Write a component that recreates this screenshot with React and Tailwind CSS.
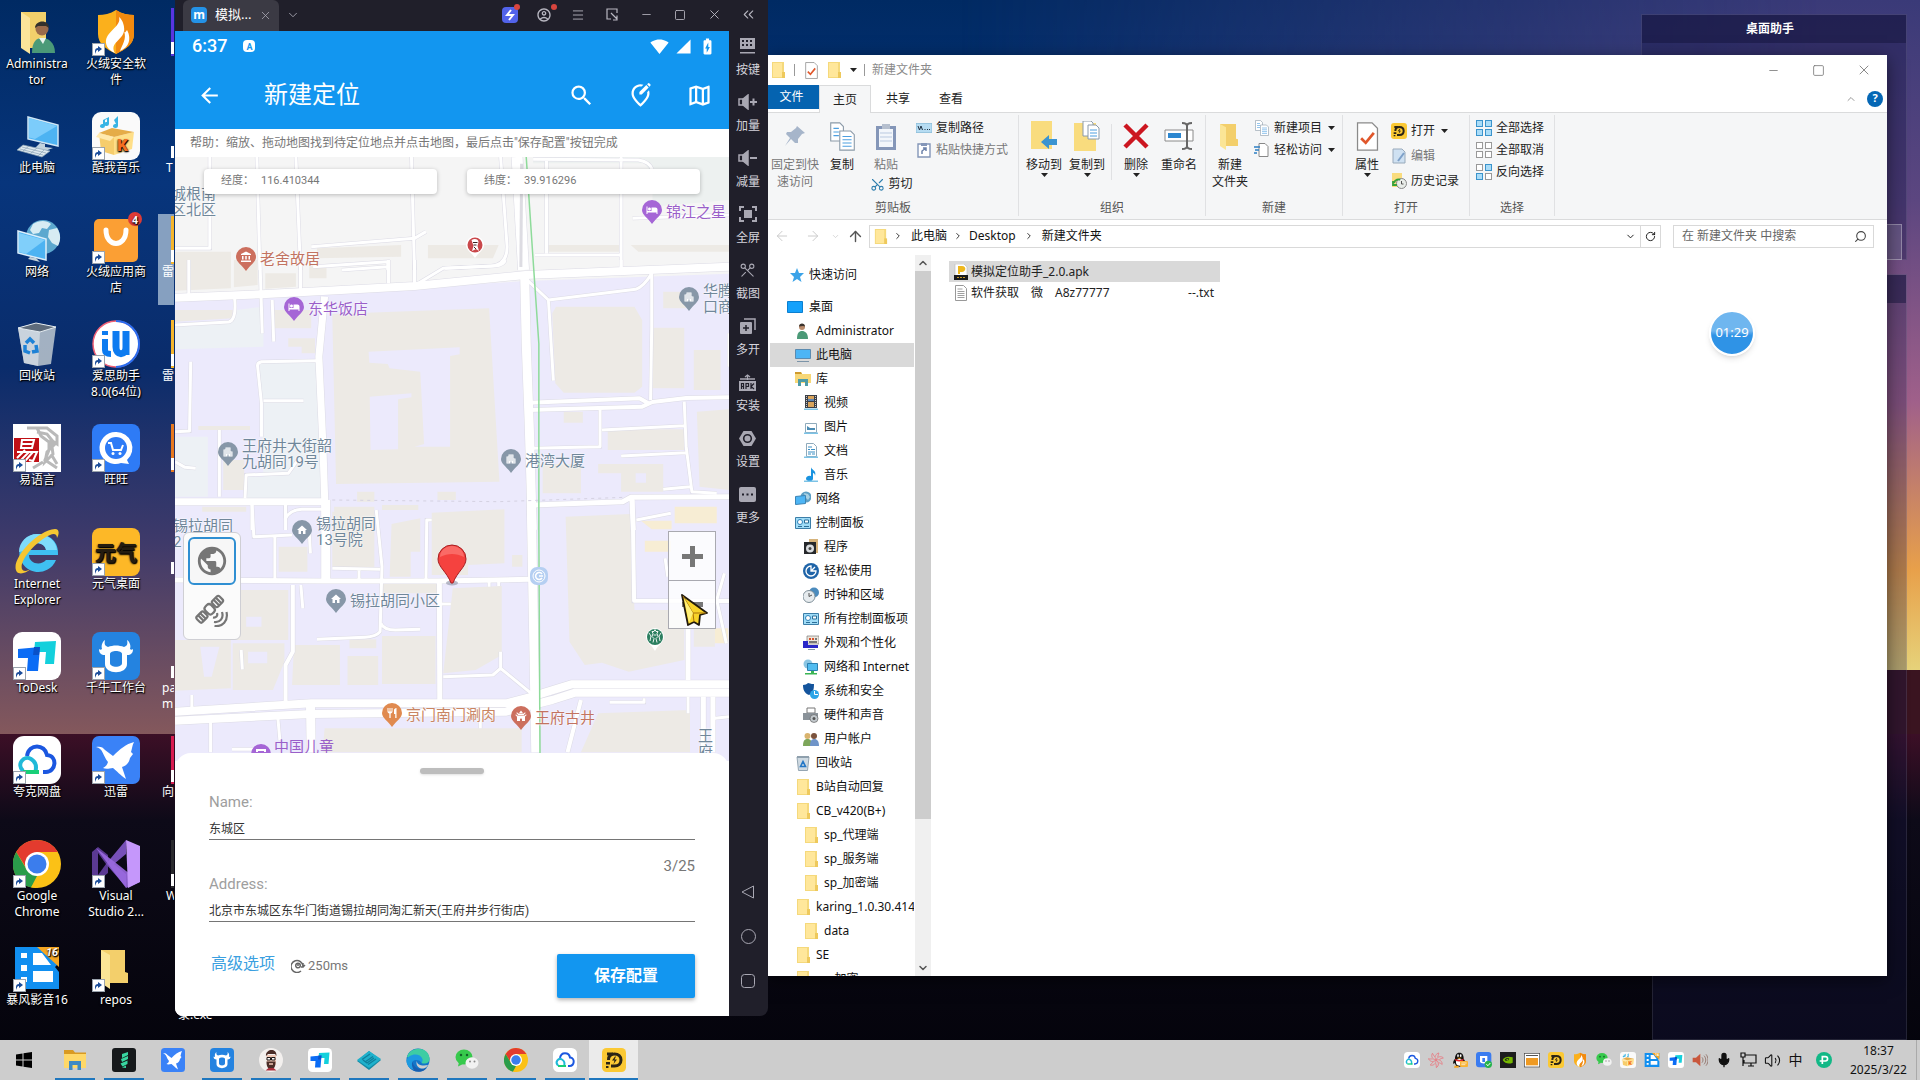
import React from "react";
import {
  MdArrowBack, MdSearch, MdOutlineEditLocationAlt, MdOutlineMap, MdPublic,
  MdSignalWifi4Bar, MdSignalCellular4Bar, MdBatteryChargingFull, MdHotel, MdAccountBalance,
  MdRestaurant, MdApartment, MdHome, MdTempleBuddhist, MdOutlineAccountCircle,
} from "react-icons/md";
import {
  X, ChevronDown, ChevronUp, ChevronRight, Menu, Minus, Square, ChevronsLeft, ArrowLeft, ArrowRight,
  ArrowUp, RotateCw, Search, Scissors, Mic, Volume2,
} from "lucide-react";

/* ---------- logos, drawn on a 48 unit grid ---------- */

const Svg = ({ s = 48, children }) => (
  <svg width={s} height={s} viewBox="0 0 48 48" aria-hidden="true" className="block shrink-0">{children}</svg>
);

const UserFolder = ({ s }) => (
  <Svg s={s}>
    <path d="M8 4h25v36H8z" fill="#f2d06b" />
    <path d="M8 4l9 6v36l-9-6z" fill="#fbe49a" />
    <circle cx="29" cy="21" r="6.5" fill="#9a6a4b" />
    <path d="M22 20c0-8 14-9 14 0l-3-2-8 0z" fill="#33302c" />
    <path d="M19 45c0-11 4-15 10-15s13 4 13 15z" fill="#4b9a78" />
    <path d="M26 30l4 6 3-6z" fill="#e8f3ee" />
  </Svg>
);
const Huorong = ({ s }) => (
  <Svg s={s}>
    <path d="M24 2c6 4 12 5 18 5v19c0 10-8 15-18 20C14 41 6 36 6 26V7c6 0 12-1 18-5z" fill="#fbb01c" />
    <path d="M24 2c6 4 12 5 18 5v19c0 10-8 15-18 20z" fill="#f28a0f" />
    <path d="M27 9c3 10-14 14-13 26 1 6 5 8 9 10-6-10 8-13 9-22 3 8-2 14-4 20 12-5 10-16 7-21-2 3-3 3-3 3 1-6-1-13-5-16z" fill="#fff" />
  </Svg>
);
const Computer = ({ s }) => (
  <Svg s={s}>
    <path d="M15 5l30 8v21l-30-7z" fill="#4db3f2" stroke="#cfe6f5" strokeWidth="1.5" />
    <path d="M16 6l28 8-22 13-6-1.500z" fill="#7cccfb" />
    <path d="M27 31l5 1v3l8 1-8 3-10-3z" fill="#c3d3de" />
    <path d="M10 33l27 6-8 6-25-7z" fill="#dfe9ef" stroke="#8ba3b5" strokeWidth=".7" />
    <path d="M9 35l24 6M7 37l23 6M16 34l-6 5M24 36l-6 5M31 38l-6 6" stroke="#8ba3b5" strokeWidth=".7" />
  </Svg>
);
const Kuwo = ({ s }) => (
  <Svg s={s}>
    <rect width="48" height="48" rx="9" fill="#fafafa" />
    <path d="M11 8l6-3v7a2.500 2 0 1 1-2-2V7l-2 1v6a2.500 2 0 1 1-2-2zM22 8l4-4v10a2.500 2 0 1 1-2-2z" fill="#38b4e4" />
    <path d="M7 21l15 4v18L9 39z" fill="#f6cd6c" /><path d="M22 25l20-5-2 17-18 6z" fill="#ffdf88" />
    <path d="M7 21l13-5 22 4-20 5z" fill="#e5ac48" /><path d="M4 25l3-4 15 4-4 4z" fill="#ffe9ae" />
    <text x="25" y="39" fontSize="17" fontWeight="900" fontFamily="Roboto" fill="#f36e21">K</text>
  </Svg>
);
const Network = ({ s }) => (
  <Svg s={s}>
    <circle cx="30" cy="21" r="17" fill="#5ca8cf" />
    <path d="M20 8c6-4 14-4 18 0l-4 5-5-1-3 5-6 1-3-4zM36 14l8-2c4 6 4 12 1 18l-6-3-4-6z" fill="#d7ecf3" />
    <path d="M5 15l28 8v21L5 37z" fill="#4db3f2" stroke="#dceefa" strokeWidth="1.500" />
    <path d="M6 17l26 7-19 14-7-2z" fill="#80cffa" /><path d="M17 41l6 1 4 4-12-3z" fill="#c5d3da" />
  </Svg>
);
const AppStore = ({ s }) => (
  <Svg s={s}>
    <rect x="2" y="3" width="44" height="43" rx="5" fill="#fb9f34" />
    <path d="M14 14c0 18 20 18 20 0" stroke="#fff" strokeWidth="5" fill="none" strokeLinecap="round" />
  </Svg>
);
const Bin = ({ s }) => (
  <Svg s={s}>
    <path d="M5 8l18-5 20 4-5 37-13 2-14-3z" fill="#b4c0cb" opacity=".9" />
    <path d="M5 8l22 4-2 34-14-3z" fill="#d3dce3" opacity=".8" />
    <path d="M5 8l18-5 20 4-16 5z" fill="#5e6b7b" stroke="#e4ebf0" />
    <path d="M13 23l4-4 4 4M23 25l1 6-5 1M17 33l-5-2 0-6" stroke="#1f82d6" strokeWidth="3.500" fill="none" />
  </Svg>
);
const Aisi = ({ s }) => (
  <Svg s={s}>
    <circle cx="24" cy="24" r="23" fill="#fff" stroke="#ef6076" strokeWidth="1.500" />
    <path d="M24 1a23 23 0 0 1 0 46" fill="none" stroke="#2a6df0" strokeWidth="2" />
    <path d="M13 11v4M13 19v11c0 3 2 4 6 4" stroke="#0d7bf0" strokeWidth="6" fill="none" />
    <path d="M24 11v16c0 9 10 9 10 0V11M34 11v24" stroke="#0d7bf0" strokeWidth="7" fill="none" />
  </Svg>
);
const Yi = ({ s }) => (
  <Svg s={s}>
    <rect width="48" height="48" fill="#fff" />
    <path d="M14 4h20l10 8v8l-6-4 2 14-8 8 2-10 8-8-8-10-10-2M24 4l4 8 8 6v8l-4 10 12 8M38 30l6 10M20 44l10-6" stroke="#b9b9b9" strokeWidth="3" fill="none" />
    <path d="M1 14h25v24H1z" fill="#c01016" />
    <path d="M9 16h12l-2 8H8zM9 20h11M4 28h20l-4 9-4-1M12 26l-8 8M16 28l-9 9M20 28l-8 9" stroke="#fff" strokeWidth="2" fill="none" />
  </Svg>
);
const Wangwang = ({ s }) => (
  <Svg s={s}>
    <rect width="48" height="48" rx="8" fill="#2e7bf6" />
    <path d="M24 8a16 16 0 1 0 5 31l8 1-2-4A16 16 0 0 0 24 8z" fill="#fff" />
    <circle cx="24" cy="24" r="11" fill="#2e7bf6" />
    <path d="M16 19h3l2 7h8l2-5" stroke="#fff" strokeWidth="2" fill="none" /><circle cx="21" cy="29.500" r="1.500" fill="#fff" /><circle cx="28" cy="29.500" r="1.500" fill="#fff" />
  </Svg>
);
const IE = ({ s }) => (
  <Svg s={s}>
    <path d="M24 6a19 19 0 1 0 19 26h-10c-5 6-17 4-17-5h29C46 14 37 6 24 6zm-8 16c1-9 16-9 17 0z" fill="#3fc0f2" />
    <path d="M24 6C14 6 6 14 6 24l9-2c3-10 17-8 18 0h11C43 12 34 6 24 6z" fill="#7fdcfb" />
    <path d="M4 44C-4 34 22 3 42 1c5 0 4 6 2 9 0-4-3-5-7-3C22 14 6 33 9 41c1 3 6 2 9 0-5 4-11 6-14 3z" fill="#f5c632" />
  </Svg>
);
const Yuanqi = ({ s }) => (
  <Svg s={s}>
    <rect width="48" height="48" rx="8" fill="#fdb827" />
    <text x="3" y="32" fontSize="21" fontWeight="900" fontFamily="Noto Sans CJK SC" fill="#241c10">元气</text>
  </Svg>
);
const ToDesk = ({ s }) => (
  <Svg s={s}>
    <rect width="48" height="48" rx="9" fill="#fff" />
    <path d="M22 10l21-1-2 23h-9l1-12H21z" fill="#13d0dc" /><path d="M5 17l22-2-2 24H14l1-13H5z" fill="#0b6cf5" /><path d="M21 15l6 0-1 8H20z" fill="#0a51c9" />
  </Svg>
);
const Qianniu = ({ s }) => (
  <Svg s={s}>
    <rect width="48" height="48" rx="8" fill="#2483e0" />
    <path d="M13 8c-1 4 0 6 3 7 5-2 11-2 16 0 3-1 4-3 3-7 3 2 4 6 3 9 1 1 2 1 3 0 0 4-2 6-6 6v9c0 11-22 11-22 0v-9c-4 0-6-2-6-6 1 1 2 1 3 0-1-3 0-7 3-9z" fill="#fff" />
    <path d="M18 22c0-4 12-4 12 0v9c0 5-12 5-12 0z" fill="#2483e0" />
  </Svg>
);
const Quark = ({ s }) => (
  <Svg s={s}>
    <rect width="48" height="48" rx="11" fill="#fff" />
    <path d="M14 20c2-13 18-12 20-1 11 1 9 17-1 17h-3" fill="none" stroke="#1b57e0" strokeWidth="4" />
    <path d="M10 35c-7-7 1-16 8-12 5 3 6 8 4 14" fill="none" stroke="#20b9d8" strokeWidth="4" />
    <path d="M10 36h16" stroke="#18cf78" strokeWidth="4" />
  </Svg>
);
const Xunlei = ({ s }) => (
  <Svg s={s}>
    <rect width="48" height="48" rx="7" fill="#3a82f7" />
    <path d="M4 11c4-1 7 0 9 3l8 6C28 13 34 8 42 6c-2 4-2 7-3 10l2 2-3 4c-1 5-4 8-8 9l4 12c-6-4-9-8-13-11-5 1-8 1-10 0 3-2 4-3 5-6-5-6-5-14-12-15z" fill="#fff" />
  </Svg>
);
const Chrome = ({ s }) => (
  <Svg s={s}>
    <circle cx="24" cy="24" r="24" fill="#fbc116" />
    <path d="M24 0a24 24 0 0 1 20.800 12H24L14 29 3.200 12A24 24 0 0 1 24 0z" fill="#e33b2e" />
    <path d="M3.200 12L14 30l10 6-6 11.500A24 24 0 0 1 3.200 12z" fill="#2a9c4a" />
    <path d="M24 12h20.800L34 30 23 48l-5-.5L28 34z" fill="#fbc116" />
    <circle cx="24" cy="24" r="12" fill="#fff" /><circle cx="24" cy="24" r="9.500" fill="#3b7ded" />
  </Svg>
);
const VStudio = ({ s }) => (
  <Svg s={s}>
    <path d="M0 12l6-5 10 8v18l-10 8-6-5z" fill="#5b3a92" /><path d="M6 13v22l8-11z" fill="#0a0716" />
    <path d="M34 0L14 24l20 23V34L22 24l12-10z" fill="#7750b8" />
    <path d="M4 8L34 48l14-6-24-19z" fill="#9a69e0" opacity=".9" />
    <path d="M34 0l14 6v36l-12 6z" fill="#c597fb" />
  </Svg>
);
const Baofeng = ({ s }) => (
  <Svg s={s}>
    <path d="M2 3h44v16l-4 4 4 5v17H2z" fill="#118ff0" /><path d="M24 3h22v20z" fill="#f6a723" />
    <path d="M8 9h6v5H8zM8 21h6v6H8zM20 9h9l9 12H20zM20 27h20v11H20zM8 33h6v5H8z" fill="#fff" />
    <text x="33" y="12" fontSize="11" fontWeight="700" fontStyle="italic" fontFamily="Roboto" fill="#fff">16</text>
  </Svg>
);
const Folder = ({ s }) => (
  <Svg s={s}>
    <path d="M9 6h24v22l3 1v10H9z" fill="#f3cf6b" /><path d="M9 6l9 5v34l-9-6z" fill="#fbe596" />
  </Svg>
);
const FlatFolder = ({ s = 16 }) => (
  <svg width={s} height={s} viewBox="0 0 16 16" className="block shrink-0" aria-hidden="true">
    <path d="M2 0h12v12l1 0v4H2z" fill="#f5d97c" /><path d="M3 1h9v14H3z" fill="#ffe79b" /><path d="M12 10h3v6h-3z" fill="#eec95c" />
  </svg>
);
const Explorer = ({ s }) => (
  <Svg s={s}>
    <path d="M2 4h18l4 5h22v9H2z" fill="#d99a22" /><path d="M2 12h44v28H2z" fill="#ffd868" />
    <path d="M12 44V26h24v18h-7V34H19v10z" fill="#3f8ac4" />
  </Svg>
);
const GreenFeather = ({ s }) => (
  <Svg s={s}><rect width="48" height="48" rx="6" fill="#16191b" /><path d="M20 12l12-4v6l-12 6zM18 22l14-6v6l-12 6zM17 31l14-6v7l-10 5zM20 39l8-4v5z" fill="#38d6a0" /></Svg>
);
const Avatar = ({ s }) => (
  <Svg s={s}>
    <circle cx="24" cy="24" r="24" fill="#f3f0ee" /><path d="M15 14h19v18c-4 9-14 9-18 0z" fill="#f0c7b5" />
    <path d="M14 16c-2-14 22-18 21 0l-3-4H18zM15 27h18c0 12-3 15-9 15s-9-4-9-15z" fill="#4b2d27" />
    <path d="M16 19h7v5h-7zM25 19h7v5h-7z" stroke="#1b1717" strokeWidth="2" fill="#fff" /><path d="M20 32h8" stroke="#f3c9b7" strokeWidth="3" />
    <path d="M13 45l6-5h10l6 5z" fill="#a82e3a" />
  </Svg>
);
const Diamond = ({ s }) => (
  <Svg s={s}>
    <path d="M24 6l24 18-24 20L0 26z" fill="#138aa5" /><path d="M24 6l24 16-24 18L0 24z" fill="#1fb1cc" />
    <path d="M10 23l16-11M16 28l16-11M12 24l8 6 14-10M22 33l16-11" stroke="#0f7f9b" strokeWidth="2.500" fill="none" />
  </Svg>
);
const Edge = ({ s }) => (
  <Svg s={s}>
    <circle cx="24" cy="24" r="23" fill="#1376c9" />
    <path d="M2 18C8-4 44-4 47 20c1 10-9 13-16 10 3-7-4-13-12-13S6 22 2 18z" fill="#3dcda3" />
    <path d="M20 17c-8 2-11 18 4 24 6 2 13 1 18-2-6 10-22 12-32 2C-4 26 8 14 20 17z" fill="#185fb0" />
    <path d="M1 25C4 11 28 8 33 22c1 3-1 6-2 8-2-4-5-6-11-6C10 24 10 36 16 44 6 41 1 34 1 25z" fill="#1d9ae0" />
    <path d="M22 25c-2 8 10 12 22 9-2 4-5 6-9 7-9 1-17-6-13-16z" fill="#cdcdcd" />
  </Svg>
);
const WeChat = ({ s }) => (
  <Svg s={s}>
    <ellipse cx="18" cy="18" rx="17" ry="15" fill="#37c94c" /><path d="M8 28l-2 9 10-5z" fill="#37c94c" />
    <circle cx="12" cy="14" r="2.500" fill="#14642a" /><circle cx="24" cy="14" r="2.500" fill="#14642a" />
    <ellipse cx="34" cy="30" rx="13" ry="11.500" fill="#f2f2f2" /><circle cx="30" cy="27" r="2" fill="#8b8b8b" /><circle cx="39" cy="27" r="2" fill="#8b8b8b" />
  </Svg>
);
const LD = ({ s }) => (
  <Svg s={s}>
    <rect width="48" height="48" rx="9" fill="#fbc934" />
    <path d="M13 24c0-8 5-12 12-12 8 0 13 5 13 12s-5 12-13 12h-7" stroke="#2b2415" strokeWidth="6" fill="none" />
    <path d="M10 9h12v6H10zM8 28h8v5H8zM8 36h5v4H8zM26 17l-6 8h5l-2 7 7-9h-5l3-6z" fill="#2b2415" />
  </Svg>
);
const WinLogo = () => (
  <svg width="16" height="16" viewBox="0 0 16 16" aria-hidden="true"><path d="M0 2.500L6.500 1.500V7.500H0zM7.500 1.300L16 0v7.500H7.500zM0 8.500h6.500v6L0 13.500zM7.500 8.500H16V16l-8.500-1.300z" fill="#000" /></svg>
);
const Pinwheel = ({ s }) => (
  <Svg s={s}>{[0, 51, 103, 154, 206, 257, 309].map((a) => (
    <path key={a} d="M24 24C18 14 24 4 33 3c-3 4-2 8-4 12" fill="none" stroke="#e77d84" strokeWidth="2.500" transform={`rotate(${a} 24 24)`} />))}</Svg>
);
const QQ = ({ s }) => (
  <Svg s={s}>
    <path d="M22 2c10 0 13 8 13 18 5 7 7 12 5 16l-4-3-6 11H14L8 33l-4 3c-2-6 1-11 5-16C9 10 13 2 22 2z" fill="#111" />
    <ellipse cx="22" cy="31" rx="10" ry="10" fill="#fff" /><path d="M10 20c8 5 16 5 24 0l1 5c-9 5-17 5-26 0z" fill="#e5252a" />
    <ellipse cx="18" cy="11" rx="2.500" ry="4" fill="#fff" /><ellipse cx="26" cy="11" rx="2.500" ry="4" fill="#fff" />
    <path d="M14 17h16l-8 4zM8 41h12v6H6z" fill="#f7a51c" /><rect x="24" y="27" width="24" height="18" rx="3" fill="#f9b334" /><path d="M28 33h16M28 38h12" stroke="#fff" strokeWidth="2" />
  </Svg>
);
const Nvidia = ({ s }) => (
  <Svg s={s}><rect width="48" height="48" fill="#1d1d1d" /><path d="M8 24c6-10 16-12 30-8v16c-10 5-24 3-30-8z" fill="#76b900" /><path d="M14 24c4-6 9-7 14-4-4 8-8 9-14 4z" fill="#1d1d1d" /><circle cx="22" cy="23" r="3" fill="#76b900" /></Svg>
);
const TrayWindow = ({ s }) => (
  <Svg s={s}><rect x="1" y="4" width="46" height="41" fill="#fff" stroke="#444" strokeWidth="2" /><path d="M6 9h36v3H6z" fill="#555" /><path d="M6 18h36v22H6z" fill="#ef9a22" /></Svg>
);
const TrayShield = ({ s }) => (
  <Svg s={s}><rect width="46" height="46" rx="9" fill="#3b7cf0" /><path d="M12 12h22v16c0 9-22 9-22 0z" fill="#fff" /><path d="M19 18h8v12h-8z" fill="#3b7cf0" /><circle cx="37" cy="37" r="11" fill="#27b44b" /><path d="M31 37l5 4 7-8" stroke="#fff" strokeWidth="3" fill="none" /></Svg>
);
const TraySound = ({ s }) => (
  <Svg s={s}><path d="M2 17h10L25 5v38L12 31H2z" fill="#c9573c" /><path d="M30 16c4 5 4 11 0 16M36 11c7 8 7 18 0 26M42 7c8 10 8 24 0 34" stroke="#8d6a60" strokeWidth="2.500" fill="none" /></Svg>
);
const GreenP = ({ s }) => (
  <Svg s={s}><circle cx="24" cy="24" r="24" fill="#12b886" /><path d="M19 36V14h9c9 0 9 13 0 13h-9M11 27l8 0" stroke="#fff" strokeWidth="5" fill="none" /></Svg>
);

const Shortcut = () => (
  <span className="absolute bottom-0 left-0 grid h-[13px] w-[13px] place-items-center border border-[#9aa3ad] bg-white">
    <svg width="9" height="9" viewBox="0 0 9 9" aria-hidden="true"><path d="M1 9V6c0-2 1-3 3-3V1l4 3-4 3V5C2 5 2 7 1 9z" fill="#1b4d9a" /></svg>
  </span>
);

/* ---------- desktop ---------- */

const COL1 = [
  [UserFolder, ["Administra", "tor"], false], [Computer, ["此电脑"], false], [Network, ["网络"], false],
  [Bin, ["回收站"], false], [Yi, ["易语言"], true], [IE, ["Internet", "Explorer"], false],
  [ToDesk, ["ToDesk"], true], [Quark, ["夸克网盘"], true], [Chrome, ["Google", "Chrome"], true], [Baofeng, ["暴风影音16"], true],
];
const COL2 = [
  [Huorong, ["火绒安全软", "件"], true], [Kuwo, ["酷我音乐"], true], [AppStore, ["火绒应用商", "店"], true],
  [Aisi, ["爱思助手", "8.0(64位)"], true], [Wangwang, ["旺旺"], true], [Yuanqi, ["元气桌面"], true],
  [Qianniu, ["千牛工作台"], true], [Xunlei, ["迅雷"], true], [VStudio, ["Visual", "Studio 2..."], true], [Folder, ["repos"], true],
];
const COL3 = [
  [[""], "bg-[#5a35e0]", "pl-2"], [["T"], "bg-transparent", "pl-2"], [["雷"], "bg-[#f5b52c]", "pl-1"], [["雷"], "bg-[#f5b52c]", "pl-1"],
  [[""], "bg-[#e8791f]", "pl-1"], [[""], "bg-transparent", "pl-1"], [["pa", "m"], "bg-transparent", "pl-1"], [["向"], "bg-[#d81b50]", "pl-1"], [["W"], "bg-[#2a2a2e]", "pl-2"],
];

function DesktopColumn({ items, className }) {
  return (
    <div className={"flex flex-col " + className}>
      {items.map(([Icon, lines, link], i) => (
        <button key={i} type="button" className="flex h-26 flex-col items-center pt-2 text-xs leading-4 text-white [text-shadow:0_1px_2px_#000,1px_1px_1px_#000]">
          <span className="relative block">
            <Icon s={48} />
            {link && <Shortcut />}
            {Icon === AppStore && <span className="absolute -top-1 -right-0.5 grid h-3.5 w-3.5 place-items-center rounded-full bg-[#dd3b36] text-[10px] font-bold">4</span>}
          </span>
          {lines.map((l) => <span key={l} className="whitespace-nowrap">{l}</span>)}
        </button>
      ))}
    </div>
  );
}

/* ---------- map ---------- */

const BUILDINGS = [
  [-471, "#edf1f0", "M950 471H1462V600L1262 620V520L1240 490H950Z"],
  [-471, "#edeae5", "M14 755H160V810H14ZM385 745L605 735V770L385 775ZM675 735H860L845 775H675ZM990 735H1175V755H990ZM1205 735H1462V755H1225Z"],
  [309, "#edeae5", "M14 0H160V85L14 92ZM168 0H230V75L168 82ZM250 40H330V80L250 86ZM365 15H410V55H365Z"],
  [309, "#edf1f5", "M14 195L165 185L175 150L245 140V260L14 268ZM235 308L385 305L400 715H200V650H245ZM14 530H100V710H14Z"],
  [309, "#edeae5", "M14 150H165V175L14 185ZM270 150H370V205H270ZM310 235H380V280H345V260H310ZM75 498H210V510H75ZM140 600H195V690H140ZM425 162L835 145L862 665L435 672Z"],
  [309, "#edeae5", "M1010 140H1215L1235 180V380L1215 398H1030L1008 370L1000 160ZM1260 203H1345V385H1260ZM1370 270H1440V390H1370ZM1290 95H1350V145H1290ZM1145 508H1345V570H1145ZM1378 455L1462 448V690L1385 680ZM975 612H1075V700H975ZM1120 612H1290V695H1180V640H1120ZM490 695H535V725H490ZM700 695H748V720H700ZM1030 455H1080V488H1030ZM555 735H650V750H555ZM85 740H200V755H85ZM430 740H535V800H430Z"],
  [309, "#eceafc", "M520 275L758 262V283L733 288V560H640L665 552L655 335L575 325L570 312L522 308ZM523 410L632 400V412L597 418V568L525 570ZM1218 640H1245V668H1218Z"],
  [1029, "#edeae5", "M685 38L875 28V190L780 195V225H685ZM1035 50L1205 42L1215 330H1345V480L1200 515L1130 488L1085 495L1045 425ZM740 265L868 258V465L800 510L715 520ZM425 35H535V205H425ZM580 72L655 55V155H630V230H575ZM285 140H360V215H285ZM550 250H700V280H550ZM325 435H445V555H320ZM470 418H540V445H470ZM555 408H695V552H555ZM465 468H545V555H465ZM14 420H160V565L14 572ZM165 270H310V420H165ZM165 430H300V485L270 570H165Z"],
  [1029, "#edeae5", "M405 685H920V757H400ZM1120 640L1360 630V757H1075ZM895 165H922V200H895ZM1370 385H1425V440H1370Z"],
  [1029, "#eceafc", "M80 440H130L110 530H90ZM200 350H240V380H200ZM205 455H255V490H205Z"],
  [1029, "#f7edd4", "M1320 20H1430V70H1320ZM1232 62H1312V88H1260ZM1242 122H1310V155H1242ZM1425 385H1460V430H1425Z"],
];

const ROADS = [
  [-471, 3, "M105 471V745H14M228 471L236 810M330 471L342 810M632 471L640 810M865 471L882 740Q882 795 840 798L720 805M985 480V760M1180 471V810M950 478L1225 480Q1255 485 1262 510M370 740L640 715L670 695M375 800L570 785V810M955 765H1180M1210 655L1462 645"],
  [-471, 11, "M908 471L925 810"],
  [309, 8, "M14 113L240 103L400 93L640 78L930 45L1462 20"],
  [309, 3, "M50 0V105M236 0L242 220M342 0V90M572 0V70M570 20L450 30M640 70V0M650 70L715 25L850 18Q875 15 877 0M1180 0V25M268 120L272 245M170 115Q175 180 155 186L14 195M385 302L240 305Q228 308 230 320L240 430V530M245 422H350M55 305L52 513L14 515M130 510V710M197 715L200 645L310 640L335 600M990 118L1003 362M925 50L990 120L1218 88Q1240 80 1260 40V200L1257 420M1125 450V560L945 565M1345 425L1350 560L1365 695L1430 700M1130 510L1345 497M1180 588L1350 578M1290 688L1360 680M215 735V810M303 735V810M14 605L40 622L68 625M1462 220V320"],
  [309, 4, "M940 428L1228 415L1255 432M940 450L1235 440L1262 426L1350 414L1462 412"],
  [309, 7, "M405 110L390 290L400 540L408 810M14 725H410"],
  [309, 9, "M928 50L932 250L940 500L948 810"],
  [309, 5, "M950 735L1185 725L1205 712L1462 710M1208 715L1212 810"],
  [1029, 3, "M215 0L220 110L320 105M303 0V55Q315 30 345 28H400M275 110V240M365 100L368 160M540 30L555 200L550 395Q540 410 510 412L385 418M425 205L550 208M495 210V240M670 240L672 60H685M710 312H735M343 255L348 325M552 370Q560 390 590 390L655 388M715 530L845 525L865 505V455M865 505L945 580M187 450L190 508M1220 60L1310 40M1450 220L1430 300L1455 430M1295 175L1302 230M58 585V630M107 665V757M283 655L288 720M812 640V685M1355 590V640M1150 607H1240V595M1425 655L1462 650M163 748H240M835 245V260M860 245V258"],
  [1029, 4, "M322 255V455L303 495V605M1075 600L1040 757M1210 0L1214 302L1462 303"],
  [1029, 5, "M14 240L400 243H700L940 238M705 250L706 600M1355 385V540M1395 590V757M1420 590V757"],
  [1029, 9, "M408 0V240M945 0L957 757M368 600L370 757"],
  [1029, 8, "M14 635L370 610H880L940 592L1050 553H1462M14 662L370 642L880 635L1000 600L1060 578H1462"],
];

function MapCanvas() {
  return (
    <svg viewBox="14 0 1448 1815" preserveAspectRatio="none" className="absolute inset-x-0 top-0 h-[605px] w-full" aria-hidden="true">
      <rect x="14" width="1448" height="1815" fill="#eceafc" />
      <path d="M14 0H1462V350L930 372L14 434Z" fill="#f5f5f5" />
      {BUILDINGS.map(([y, c, d], i) => <path key={i} d={d} fill={c} transform={`translate(0 ${y})`} />)}
      {ROADS.map(([y, w, d], i) => <path key={i} d={d} fill="none" stroke="#dcdbe5" strokeWidth={w + 1} vectorEffect="non-scaling-stroke" transform={`translate(0 ${y})`} />)}
      {ROADS.map(([y, w, d], i) => <path key={i} d={d} fill="none" stroke="#fff" strokeWidth={w} strokeLinejoin="round" vectorEffect="non-scaling-stroke" transform={`translate(0 ${y})`} />)}
      <path d="M920 20L918 330" stroke="#dddce2" strokeWidth="3" fill="none" vectorEffect="non-scaling-stroke" />
      <path d="M425 1029L860 1034L1190 1021" stroke="#d5d2e2" strokeDasharray="3 4" fill="none" vectorEffect="non-scaling-stroke" />
      <path d="M932 0L950 309L965 560V1119L968 1800" stroke="#8edb9a" strokeWidth="1.500" fill="none" vectorEffect="non-scaling-stroke" />
    </svg>
  );
}

const TONE = {
  purple: ["text-[#9a5fc9]", "#a566d6"],
  brick: ["text-[#c27361]", "#cc6f5e"],
  orange: ["text-[#c98563]", "#e08a4f"],
  slate: ["text-[#70879a]", "#8797a8"],
};

function Poi({ at, tone, Icon, lines }) {
  return (
    <div className={"absolute flex items-center gap-1 text-[15px] leading-4 whitespace-nowrap [text-shadow:0_0_2px_#fff,0_0_2px_#fff] " + at + " " + TONE[tone][0]}>
      {Icon && (
        <span className="relative block h-6 w-5 shrink-0">
          <svg width="20" height="24" viewBox="0 0 20 24" aria-hidden="true"><path d="M10 0a10 10 0 0 1 10 10c0 5-6 8-10 14C6 18 0 15 0 10A10 10 0 0 1 10 0z" fill={TONE[tone][1]} /></svg>
          <Icon className="absolute top-1 left-1 text-white" size={12} />
        </span>
      )}
      <span>{lines.map((l) => <span key={l} className="block">{l}</span>)}</span>
    </div>
  );
}

function CoordBox({ id, label, value }) {
  return (
    <div className="flex h-[25px] min-w-0 flex-1 items-center gap-[7px] rounded-sm bg-white px-[17px] text-[11px] text-[#777] shadow-[0_1px_4px_rgba(0,0,0,.25)]">
      <label htmlFor={id} className="shrink-0 whitespace-nowrap">{label}</label>
      <input id={id} defaultValue={value} className="w-full min-w-0 bg-transparent text-[11px] outline-none" />
    </div>
  );
}

function MapView() {
  return (
    <div className="relative h-[604px] overflow-hidden font-['Roboto','Noto_Sans_CJK_SC',sans-serif]">
      <MapCanvas />
      <Poi at="-left-1 top-[29px]" tone="slate" lines={["城根南", "区北区"]} />
      <Poi at="left-[467px] top-[43px]" tone="purple" Icon={MdHotel} lines={["锦江之星"]} />
      <Poi at="left-[61px] top-[90px]" tone="brick" Icon={MdAccountBalance} lines={["老舍故居"]} />
      <Poi at="left-[109px] top-[140px]" tone="purple" Icon={MdHotel} lines={["东华饭店"]} />
      <Poi at="left-[504px] top-[126px]" tone="slate" Icon={MdApartment} lines={["华腾", "口商"]} />
      <Poi at="left-[43px] top-[281px]" tone="slate" Icon={MdApartment} lines={["王府井大街韶", "九胡同19号"]} />
      <Poi at="left-[326px] top-[292px]" tone="slate" Icon={MdApartment} lines={["港湾大厦"]} />
      <Poi at="-left-0.5 top-[361px]" tone="slate" lines={["锡拉胡同", "2"]} />
      <Poi at="left-[117px] top-[359px]" tone="slate" Icon={MdHome} lines={["锡拉胡同", "13号院"]} />
      <Poi at="left-[151px] top-[432px]" tone="slate" Icon={MdHome} lines={["锡拉胡同小区"]} />
      <Poi at="left-[207px] top-[546px]" tone="orange" Icon={MdRestaurant} lines={["京门南门涮肉"]} />
      <Poi at="left-[336px] top-[549px]" tone="brick" Icon={MdTempleBuddhist} lines={["王府古井"]} />
      <div className="absolute top-[582px] left-[99px] text-[15px] leading-4 text-[#9a5fc9]">中国儿童</div>
      <svg width="20" height="24" viewBox="0 0 20 24" className="absolute top-[587px] left-[76px]" aria-hidden="true"><path d="M10 0a10 10 0 0 1 10 10c0 5-6 8-10 14C6 18 0 15 0 10A10 10 0 0 1 10 0z" fill="#a566d6" /><path d="M6 8V5M14 8V5M6 6h8" stroke="#fff" strokeWidth="2" /></svg>
      <Poi at="left-[523px] top-[571px]" tone="slate" lines={["王", "府"]} />

      <svg width="18" height="22" viewBox="0 0 18 22" className="absolute top-[79px] left-[291px]" aria-label="KFC">
        <path d="M9 0a9 9 0 0 1 9 9c0 5-6 8-9 13C6 17 0 14 0 9a9 9 0 0 1 9-9z" fill="#fff" /><circle cx="9" cy="9" r="7.500" fill="#c9474a" />
        <path d="M5.500 4c3-2 7-1 7 2l-1 4 1.500 5-3-2-4 2 1.500-5z" fill="#fff" /><path d="M7 6.500h4.500M7.500 9h3M8 11l2 2" stroke="#3a2222" />
      </svg>
      <svg width="18" height="23" viewBox="0 0 18 23" className="absolute top-[471px] left-[471px]" aria-label="Starbucks">
        <path d="M9 0a9 9 0 0 1 9 9c0 5-6 8-9 14C6 17 0 14 0 9a9 9 0 0 1 9-9z" fill="#fff" /><circle cx="9" cy="9" r="8" fill="#2c7f60" />
        <path d="M9 1.500l1 2 2 0-1 2 1 3-2 2 1 4M9 1.500l-1 2-2 0 1 2-1 3 2 2-1 4M3 5l2 3-1 5M15 5l-2 3 1 5M7.500 7h3" stroke="#fff" strokeWidth=".9" fill="none" />
      </svg>
      <svg width="18" height="18" viewBox="0 0 18 18" className="absolute top-[410px] left-[355px]" aria-label="地铁">
        <rect width="18" height="18" rx="7" fill="#b5cff2" /><circle cx="9" cy="9" r="6" fill="none" stroke="#fff" /><path d="M12 7a3.500 3.500 0 1 0 0 4M9 9h4" stroke="#fff" fill="none" strokeWidth="1.500" />
      </svg>
      <svg width="30" height="42" viewBox="0 0 30 42" className="absolute top-[387px] left-[262px]" aria-label="当前位置">
        <ellipse cx="15" cy="39" rx="6" ry="2.500" fill="#9a9cb0" opacity=".7" />
        <path d="M15 1a14 14 0 0 1 14 14c0 8-9 13-13 24h-2C10 28 1 23 1 15A14 14 0 0 1 15 1z" fill="#f5423f" stroke="#a51f22" />
        <path d="M15 2c7 0 12 5 12 11-8-4-16-4-24 0C3 7 8 2 15 2z" fill="#fa6a66" />
      </svg>

      <div className="absolute inset-x-[29px] top-3 flex gap-[30px]">
        <CoordBox id="lng" label="经度：" value="116.410344" />
        <CoordBox id="lat" label="纬度：" value="39.916296" />
      </div>

      <div className="absolute top-[375px] left-2 flex w-[58px] flex-col items-center rounded-md border border-[#cfcfd4] bg-[#fbfbfb] p-1">
        <button type="button" aria-label="地图图层" className="grid h-12 w-12 place-items-center rounded-md border-2 border-[#2f8fd2] bg-[#f7f7f7] text-[#767676]"><MdPublic size={34} /></button>
        <button type="button" aria-label="卫星图层" className="grid h-[50px] w-12 place-items-center">
          <svg width="34" height="34" viewBox="0 0 34 34" fill="none" stroke="#767676" strokeWidth="2.200">
            <g transform="rotate(-45 14 17)"><rect x="-1" y="13" width="10" height="8" rx="2" /><rect x="11" y="12" width="8" height="10" rx="3" /><rect x="21" y="13" width="10" height="8" rx="2" /><path d="M2.500 13v8M5.500 13v8M24.500 13v8M27.500 13v8M9 17h2M19 17h2" /></g>
            <path d="M22 20c1 3-1 5-4 4.500M27 19c2 6-2 11-8 10M31.500 19c2 9-4 15-12 14" />
          </svg>
        </button>
      </div>

      <div className="absolute top-[374px] right-[13px] flex w-12 flex-col border border-[#a9a9b0] bg-white/80">
        <button type="button" aria-label="放大" className="grid h-12 place-items-center"><svg width="21" height="21" viewBox="0 0 21 21"><path d="M10.500 0v21M0 10.500h21" stroke="#777" strokeWidth="5" /></svg></button>
        <button type="button" aria-label="缩小" className="grid h-12 place-items-center border-t border-[#a9a9b0]"><svg width="21" height="21" viewBox="0 0 21 21"><path d="M0 10.500h21" stroke="#777" strokeWidth="5" /></svg></button>
      </div>
      <svg width="28" height="33" viewBox="0 0 28 33" className="absolute top-[437px] left-[506px]" aria-hidden="true">
        <path d="M1 1l25 18-7 2-1 10-5-3-6 3z" fill="#f8d32a" stroke="#221a0c" strokeWidth="1.800" strokeLinejoin="round" /><path d="M2 2l10 17 1 9M12 19l13 0" stroke="#a8720c" fill="none" /><path d="M3 4l9 15-4 10z" fill="#fff07a" />
      </svg>
    </div>
  );
}

/* ---------- emulator window ---------- */

const Kbd = () => <svg width="18" height="16" viewBox="0 0 18 16"><path d="M1 0h15v11H1zM1 14h15v1.500H1z" fill="#a9a8b3" /><path d="M4 2v2M8 2v2M12 2v2M4 6v2M8 6v2M12 6v2" stroke="#201f2a" strokeWidth="2" /></svg>;
const Vol = ({ plus }) => <svg width="20" height="16" viewBox="0 0 20 16" fill="none" stroke="#a9a8b3" strokeWidth="1.500"><path d="M1 5h4v6H1z" /><path d="M5 5l5-4v14l-5-4z" fill="#a9a8b3" /><path d={plus ? "M12 8h7M15.500 4.500v7" : "M12 8h7"} strokeWidth="2" /></svg>;
const Full = () => <svg width="18" height="16" viewBox="0 0 18 16" fill="none" stroke="#a9a8b3" strokeWidth="2"><path d="M1 5V1h4M13 1h4v4M17 11v4h-4M5 15H1v-4" /><path d="M6 5h6v6H6z" fill="#a9a8b3" /></svg>;
const Multi = () => <svg width="17" height="17" viewBox="0 0 17 17"><path d="M5 1h11v11" stroke="#a9a8b3" fill="none" strokeWidth="1.500" /><rect x="1" y="4" width="12" height="12" rx="1" fill="#a9a8b3" /><path d="M7 7v6M4 10h6" stroke="#201f2a" strokeWidth="1.500" /></svg>;
const Apk = () => <svg width="17" height="17" viewBox="0 0 17 17"><path d="M8.500 6V1M6 3l2.500-2L11 3M1 5h15" stroke="#a9a8b3" fill="none" strokeWidth="1.300" /><path d="M0 7h17v10H0z" fill="#a9a8b3" /><path d="M2.500 15V9.500h2V15M2.500 12.500h2M7 15V9.500h2.500v3H7M12 9v6M15 9.500l-3 3 3 2.500" stroke="#201f2a" fill="none" strokeWidth="1.200" /></svg>;
const Cog = () => <svg width="17" height="17" viewBox="0 0 17 17"><path d="M4.500 1h8L17 8.500 12.500 16h-8L0 8.500z" fill="#a9a8b3" /><circle cx="8.500" cy="8.500" r="3.800" fill="none" stroke="#201f2a" strokeWidth="1.600" /></svg>;
const More = () => <svg width="17" height="15" viewBox="0 0 17 15"><rect width="17" height="15" rx="2" fill="#a9a8b3" /><path d="M3 7.500h2M7.500 7.500h2M12 7.500h2" stroke="#201f2a" strokeWidth="2" /></svg>;
const Resize = () => <svg width="12" height="13" viewBox="0 0 12 13" fill="none" stroke="#b9b8c2" strokeWidth="1.200"><path d="M5 11H1V1h10v4M5 5l6 6M11 7.500V12H7" /></svg>;

const SIDE = [
  [<Kbd key="i" />, "按键"], [<Vol plus key="i" />, "加量"], [<Vol key="i" />, "减量"], [<Full key="i" />, "全屏"],
  [<Scissors key="i" size={17} strokeWidth={1.5} className="rotate-90" />, "截图"], [<Multi key="i" />, "多开"], [<Apk key="i" />, "安装"], [<Cog key="i" />, "设置"], [<More key="i" />, "更多"],
];

const TitleBtn = ({ label, children }) => (
  <button type="button" aria-label={label} className="relative grid h-[29px] w-[34px] place-items-center text-[#b9b8c2]">{children}</button>
);

function Emulator() {
  return (
    <section className="absolute top-0 bottom-16 left-[175px] flex w-[593px] flex-col overflow-hidden rounded-b-lg bg-[#201f2a] font-['Noto_Sans','Noto_Sans_CJK_SC',sans-serif]">
      <header className="flex h-[31px] shrink-0 items-start text-white">
        <div className="ml-2 flex h-[31px] w-[96px] items-center gap-2 rounded-t-md bg-[#3b3a44] px-2 pb-px text-[13px]">
          <span className="grid h-4 w-4 shrink-0 place-items-center rounded bg-[#2492e6] text-xs font-bold">m</span>
          <span className="flex-1 whitespace-nowrap">模拟...</span>
          <button type="button" aria-label="关闭标签" className="text-[#a9a8b3]"><X size={13} strokeWidth={1.5} /></button>
        </div>
        <button type="button" aria-label="标签列表" className="grid h-[29px] w-7 place-items-center text-[#a9a8b3]"><ChevronDown size={14} strokeWidth={1.5} /></button>
        <div className="ml-auto flex pr-[3px]">
          <TitleBtn label="加速">
            <span className="grid h-4 w-4 place-items-center rounded bg-[#5263ea]"><svg width="10" height="12" viewBox="0 0 10 12"><path d="M6 1L2 6h6L4 11" stroke="#fff" strokeWidth="2" fill="none" /></svg></span>
            <i className="absolute top-1 right-[7px] h-1.5 w-1.5 rounded-full bg-[#d8453e]" />
          </TitleBtn>
          <TitleBtn label="账号"><MdOutlineAccountCircle size={16} /><i className="absolute top-1 right-1 h-1.5 w-1.5 rounded-full bg-[#d8453e]" /></TitleBtn>
          <TitleBtn label="菜单"><Menu size={14} strokeWidth={1.5} /></TitleBtn>
          <TitleBtn label="调整"><Resize /></TitleBtn>
          <TitleBtn label="最小化"><Minus size={13} strokeWidth={1.5} /></TitleBtn>
          <TitleBtn label="最大化"><Square size={12} strokeWidth={1.7} /></TitleBtn>
          <TitleBtn label="关闭"><X size={15} strokeWidth={1.5} /></TitleBtn>
          <TitleBtn label="收起"><ChevronsLeft size={17} strokeWidth={1.5} /></TitleBtn>
        </div>
      </header>
      <div className="flex min-h-0 flex-1">
        <div className="flex min-w-0 flex-1 flex-col bg-white font-['Roboto','Noto_Sans_CJK_SC',sans-serif]">
          <div className="flex h-[98px] shrink-0 flex-col bg-[#1296f0] text-white">
            <div className="flex h-[30px] items-center pr-4 pl-[17px] text-lg font-medium">
              <span>6:37</span>
              <span className="ml-4 grid h-3 w-3 place-items-center rounded-sm bg-white text-[9px] font-bold text-[#1296f0]">A</span>
              <span className="ml-auto flex items-center gap-0.5"><MdSignalWifi4Bar size={19} /><MdSignalCellular4Bar size={17} className="ml-1" /><MdBatteryChargingFull size={19} className="ml-1 -mr-1" /></span>
            </div>
            <div className="flex flex-1 items-center pr-4 pl-[22px]">
              <button type="button" aria-label="返回"><MdArrowBack size={25} /></button>
              <h1 className="ml-[42px] flex-1 text-2xl">新建定位</h1>
              <span className="flex gap-8">
                <button type="button" aria-label="搜索"><MdSearch size={27} /></button>
                <button type="button" aria-label="编辑位置"><MdOutlineEditLocationAlt size={27} /></button>
                <button type="button" aria-label="地图"><MdOutlineMap size={27} /></button>
              </span>
            </div>
          </div>
          <p className="h-7 shrink-0 pl-[15px] text-xs leading-7 whitespace-nowrap text-[#777]">帮助：缩放、拖动地图找到待定位地点并点击地图，最后点击"保存配置"按钮完成</p>
          <MapView />
          <form className="relative -mt-2 flex flex-1 flex-col rounded-t-2xl bg-white px-[34px] pt-[15px]" onSubmit={(e) => e.preventDefault()}>
            <span className="h-1.5 w-16 self-center rounded-full bg-[#bdbdbd] shadow-sm" />
            <label htmlFor="name" className="mt-[18px] text-[15px] leading-5 text-[#9e9e9e]">Name:</label>
            <input id="name" defaultValue="东城区" className="mt-1 h-6 border-b border-[#757575] text-xs text-[#333] outline-none" />
            <span className="mt-4 self-end text-[15px] leading-5 text-[#777]">3/25</span>
            <label htmlFor="address" className="-mt-0.5 text-[15px] leading-5 text-[#9e9e9e]">Address:</label>
            <input id="address" defaultValue="北京市东城区东华门街道锡拉胡同淘汇新天(王府井步行街店)" className="mt-1 h-6 border-b border-[#757575] text-xs text-[#333] outline-none" />
            <div className="mt-8 flex items-start">
              <a href="#advanced" className="ml-0.5 text-base leading-5 text-[#3b9fe0]">高级选项</a>
              <span className="ml-4 flex items-center gap-0.5 text-[13px] leading-6 text-[#777]">
                <svg width="15" height="14" viewBox="0 0 15 14" fill="none" stroke="#666" strokeWidth="1.500"><path d="M10 12a6 6 0 1 1 2-5M12 4v4h-2M12 8l2-2" /><circle cx="7" cy="6.500" r="2.300" /><path d="M7 5v2" /></svg>
                250ms
              </span>
              <button type="submit" className="ml-auto h-11 w-[138px] rounded-xs bg-[#1296f0] text-base font-bold text-white shadow-[0_2px_4px_rgba(0,0,0,.3)]">保存配置</button>
            </div>
          </form>
        </div>
        <aside className="flex w-[39px] shrink-0 flex-col items-center pr-px text-xs text-[#d5d4dc]">
          {SIDE.map(([icon, label]) => (
            <button key={label} type="button" className="flex h-14 flex-col items-center text-[#a9a8b3]">
              <span className="grid h-[30px] place-items-center">{icon}</span>
              <span className="leading-[18px] text-[#d5d4dc]">{label}</span>
            </button>
          ))}
          <div className="mt-auto mb-7 flex flex-col items-center gap-[30px]">
            <button type="button" aria-label="返回键"><svg width="14" height="14" viewBox="0 0 14 14"><path d="M12.500 1v12L1 7z" fill="none" stroke="#a9a8b3" /></svg></button>
            <button type="button" aria-label="主页键"><svg width="15" height="15" viewBox="0 0 15 15"><circle cx="7.500" cy="7.500" r="7" fill="none" stroke="#a9a8b3" /></svg></button>
            <button type="button" aria-label="多任务键"><svg width="14" height="14" viewBox="0 0 14 14"><rect x=".5" y=".5" width="13" height="13" rx="3" fill="none" stroke="#a9a8b3" /></svg></button>
          </div>
        </aside>
      </div>
    </section>
  );
}

/* ---------- explorer window ---------- */

const I16 = ({ children, w = 16 }) => <svg width={w} height={w} viewBox="0 0 16 16" className="block shrink-0" aria-hidden="true">{children}</svg>;
const CheckDoc = ({ w = 16 }) => <I16 w={w}><path d="M2.500.5h8l3 3v12h-11z" fill="#fff" stroke="#8a8a8a" strokeWidth=".7" /><path d="M4.500 9l2.500 2.500L11.500 6" stroke="#e0572b" strokeWidth="1.500" fill="none" /></I16>;
const Pages = ({ w = 16 }) => <I16 w={w}><path d="M1.500.5h5l2 2v8h-7z" fill="#fff" stroke="#8b9aa8" strokeWidth=".6" /><path d="M6.500 5h6l2 2v8.500h-8z" fill="#fff" stroke="#8b9aa8" strokeWidth=".6" /><path d="M3 3.500h3M3 5.500h3M3 7.500h3M8 8h5M8 9.800h5M8 11.600h5M8 13.400h5" stroke="#4d9fe0" strokeWidth=".6" /></I16>;
const Caret = () => <svg width="7" height="4" viewBox="0 0 7 4" aria-hidden="true"><path d="M0 0h7L3.500 4z" fill="#222" /></svg>;
const Monitor = () => <I16><path d="M.5 2.500h15v9H.5z" fill="#4db5f5" stroke="#5b8bb0" /><path d="M2 14.500h12" stroke="#7c94a8" /></I16>;
const Panel = () => <I16><path d="M.5 2.500h15v11H.5z" fill="#9fdcf7" stroke="#3c7ea8" /><circle cx="5" cy="7" r="2.500" fill="#fff" stroke="#2d82bb" /><path d="M9.500 5h4v3h-4zM3 11.500h4M9 11.500h5" stroke="#2d6f98" fill="#fff" /></I16>;
const Person = ({ c = "#4b9a78" }) => <I16><circle cx="7" cy="4" r="3" fill="#b98b6c" /><path d="M4 3.500C4-.5 10-.5 10 3.500L8 3z" fill="#3b342e" /><path d="M2 16c0-6 2-8 5-8s6 2 6 8z" fill={c} /></I16>;
const Base = () => <path d="M1 13.500h14v1.500H1z" fill="#7cc3e6" />;
const NavIcons = {
  star: <I16><path d="M8 1l2 5 5 0-4 4 1.500 5L8 12l-4.500 3L5 10 1 6l5 0z" fill="#3ba3e8" /></I16>,
  desktop: <I16><path d="M.5 2.500h15v11H.5z" fill="#14a1fb" stroke="#0b7fd0" /></I16>,
  person: <Person />, pc: <Monitor />,
  lib: <I16><path d="M0 1h6l1 2h9v9H0z" fill="#f7d777" /><path d="M0 1h6l1 2H0z" fill="#cf9a2d" /><path d="M3 15V8h10v7h-3v-4H6v4z" fill="#4f9ba6" /></I16>,
  video: <I16><path d="M2 0h12v13H2z" fill="#3b3f47" /><path d="M5 1h6v5H5zM5 7h6v5H5z" fill="#d9a45b" /><path d="M5 4h6v2H5z" fill="#5f86b5" /><path d="M3.500 1v11M12.500 1v11" stroke="#ccc" strokeDasharray="1 1" /><Base /></I16>,
  pic: <I16><path d="M2.500 4.500h11v9h-11z" fill="#fff" stroke="#8faabb" /><path d="M4 11V7l3 2 5 0v2z" fill="#4b8cb4" /><Base /></I16>,
  doc: <I16><path d="M3.500.5h7l3 3v10h-10z" fill="#fff" stroke="#8faabb" /><path d="M5 4h4M5 6.500h2M8 6.500h4M5 9h7M5 11h3M9 11h3" stroke="#3b8fc4" /><Base /></I16>,
  music: <I16><path d="M8 0c0 3 6 3 4 9 0-2-1-3-2-3v5.500a3.500 2.800 0 1 1-2-2.500z" fill="#1a93df" /><Base /></I16>,
  net: <I16><circle cx="11" cy="6" r="5.500" fill="#5d9fc4" /><path d="M9 2l4 1 2 3-2 3-3-3z" fill="#a9d0e2" /><path d="M.5 5.500l10-1v8l-10 1z" fill="#4db5f5" stroke="#3b84b5" /></I16>,
  panel: <Panel />,
  prog: <I16><path d="M6 0h9v14H6z" fill="#d6b37b" /><path d="M1 3h12v12H1z" fill="#26282b" /><circle cx="7" cy="9.500" r="4" fill="#d9dcdf" /><circle cx="7" cy="9.500" r="1.500" fill="#444" /></I16>,
  ease: <I16><circle cx="8" cy="8" r="8" fill="#1f64a8" /><path d="M8 3a5 5 0 1 0 5 5H8zM8 8l4-4M8 8V3" stroke="#fff" strokeWidth="1.300" fill="none" /></I16>,
  clock: <I16><circle cx="11" cy="5.500" r="5" fill="#4b8bbd" /><circle cx="6" cy="9.500" r="6" fill="#e6ebee" stroke="#80909a" /><path d="M6 6v3.500L9 8" stroke="#555" fill="none" /></I16>,
  look: <I16><path d="M4 1h12v8H4z" fill="#ece6dc" stroke="#666" strokeWidth=".6" /><path d="M6 3h2v2H6zM9 3h2v2H9z" fill="#d8522b" /><path d="M12 3h2v2h-2zM6 6h8v2H6z" fill="#777" /><path d="M0 6h5v4h10v3H0z" fill="#2a28c8" /><path d="M5 14h7v1H5z" fill="#8497a6" /></I16>,
  inet: <I16><circle cx="5" cy="5" r="4.500" fill="#8cc6e3" /><path d="M4.500 4.500h10v7h-10z" fill="#51bcf0" stroke="#2b7fb0" /><path d="M8 12h3v2h-3zM2 14h12v1.500H2z" fill="#3bb554" /></I16>,
  shield: <I16><path d="M5 0c3 1 5 1 6 1 0 6-1 9-5 11C1 10 0 6 0 2c2 0 4-1 5-2z" fill="#14549c" /><circle cx="11.500" cy="11.500" r="4.500" fill="#2ba5e8" /><path d="M11.500 8v3.500H15" stroke="#fff" fill="none" /></I16>,
  printer: <I16><path d="M4 1h8v5H4z" fill="#fff" stroke="#777" /><path d="M0 6h15v7H0z" fill="#8a9299" /><circle cx="11" cy="11.500" r="4" fill="#c2c8cc" stroke="#666" strokeWidth=".7" /><circle cx="11" cy="11.500" r="1.500" fill="#555" /></I16>,
  users: <I16><circle cx="4.500" cy="5" r="3" fill="#d9b36e" /><path d="M0 15c0-6 2-7 4.500-7S9 9 9 15z" fill="#7da65a" /><circle cx="11" cy="5" r="3" fill="#7b523c" /><path d="M7 15c0-6 2-7 4.500-7S16 10 16 15z" fill="#6f94c8" /></I16>,
  bin: <I16><path d="M2 2h12l-1.500 13.500h-9z" fill="#cfdae2" stroke="#94a5b2" /><path d="M2 1h12v2H2z" fill="#8fa0ad" /><path d="M5.500 11.500L8 6.500l2.500 5z" fill="none" stroke="#2377c6" strokeWidth="1.600" /></I16>,
  folder: <FlatFolder />,
};
const TREE = [
  ["pl-[27px]", "person", "Administrator"], ["pl-[27px]", "pc", "此电脑"], ["pl-[27px]", "lib", "库"], ["pl-[35px]", "video", "视频"], ["pl-[35px]", "pic", "图片"],
  ["pl-[35px]", "doc", "文档"], ["pl-[35px]", "music", "音乐"], ["pl-[27px]", "net", "网络"], ["pl-[27px]", "panel", "控制面板"], ["pl-[35px]", "prog", "程序"],
  ["pl-[35px]", "ease", "轻松使用"], ["pl-[35px]", "clock", "时钟和区域"], ["pl-[35px]", "panel", "所有控制面板项"], ["pl-[35px]", "look", "外观和个性化"],
  ["pl-[35px]", "inet", "网络和 Internet"], ["pl-[35px]", "shield", "系统和安全"], ["pl-[35px]", "printer", "硬件和声音"], ["pl-[35px]", "users", "用户帐户"],
  ["pl-[27px]", "bin", "回收站"], ["pl-[27px]", "folder", "B站自动回复"], ["pl-[27px]", "folder", "CB_v420(B+)"], ["pl-[35px]", "folder", "sp_代理端"],
  ["pl-[35px]", "folder", "sp_服务端"], ["pl-[35px]", "folder", "sp_加密端"], ["pl-[27px]", "folder", "karing_1.0.30.414"], ["pl-[35px]", "folder", "data"], ["pl-[27px]", "folder", "SE"], ["pl-[27px]", "folder", "sp_加密"],
];

const Big = ({ icon, lines, w, dim, caret }) => (
  <button type="button" className={"flex flex-col items-center leading-[17px] whitespace-nowrap " + w + (dim ? " text-[#777]" : "")}>
    <span className="mb-1 grid h-8 place-items-center">{icon}</span>
    {lines.map((l) => <span key={l}>{l}</span>)}
    {caret && <Caret />}
  </button>
);
const Small = ({ icon, text, dim, caret }) => (
  <button type="button" className={"flex h-[22px] items-center gap-1 whitespace-nowrap " + (dim ? "text-[#777]" : "")}>
    {icon}<span>{text}</span>{caret && <span className="ml-0.5"><Caret /></span>}
  </button>
);
const Group = ({ label, w, children }) => (
  <div className={"flex h-full shrink-0 flex-col border-r border-[#e0e1e3] " + w}>
    <div className="flex min-h-0 flex-1 items-start pt-[5px]">{children}</div>
    <div className="h-4 text-center leading-4 text-[#555]">{label}</div>
  </div>
);
const Sq = ({ a, b, c, d }) => (
  <I16>{[[a, 0, 0], [b, 9, 0], [c, 0, 9], [d, 9, 9]].map(([f, x, y], i) => <rect key={i} x={x + 0.5} y={y + 0.5} width="6" height="6" fill={f ? "#a9dcf8" : "#fff"} stroke={f ? "#3b94cc" : "#999"} />)}</I16>
);

function Ribbon() {
  return (
    <div className="-ml-0.5 flex h-[108px] shrink-0 overflow-hidden border-y border-[#dadbdc] bg-[#f5f6f7] pt-0.5 pb-[3px]">
      <Group label="剪贴板" w="w-[251px]">
        <Big dim w="w-[54px]" lines={["固定到快", "速访问"]} icon={<svg width="22" height="22" viewBox="0 0 22 22"><path d="M13 1l8 7-3 1-4 5 0 4-3 0-4-4-6 7 5-8-4-4 1-2 4 0 5-4z" fill="#a6b5ca" /></svg>} />
        <Big w="w-10" lines={["复制"]} icon={<Pages w={29} />} />
        <div className="flex w-12 flex-col items-center">
          <Big dim w="w-10" lines={["粘贴"]} icon={<svg width="22" height="29" viewBox="0 0 22 29"><path d="M1 4h20v24H1z" fill="#8496b8" /><path d="M4 7h14v18H4z" fill="#f2f6fb" /><path d="M7 2h8v5H7z" fill="#b5bfce" /><path d="M5 11h12M5 15h12M5 19h12" stroke="#b9c9e0" /></svg>} />
          <span className="ml-2.5"><Small text="剪切" icon={<Scissors size={15} className="-rotate-90 text-[#2f7fae]" strokeWidth={1.7} />} /></span>
        </div>
        <div className="-mt-[3px] ml-1.5 flex flex-col">
          <Small text="复制路径" icon={<I16><path d="M0 3.500h16v9H0z" fill="#b6dcf2" stroke="#6faccf" strokeWidth=".6" /><path d="M2 6l1.500 4L5 6l1.500 4M8.500 9.500h1M11 9.500h1M13 9.500h1" stroke="#234" fill="none" /></I16>} />
          <Small dim text="粘贴快捷方式" icon={<I16><path d="M2 2h12v13H2z" fill="#fff" stroke="#8496b8" strokeWidth="1.400" /><path d="M5 1h6v3H5z" fill="#8496b8" /><path d="M6 12V9l4-3M7 6h3v3" stroke="#6c82ab" fill="none" strokeWidth="1.500" /></I16>} />
        </div>
      </Group>
      <Group label="组织" w="w-[187px]">
        <Big caret w="w-[46px] ml-0.5" lines={["移动到"]} icon={<svg width="28" height="30" viewBox="0 0 28 30"><path d="M1 0h21v28H1z" fill="#f9dc7e" /><path d="M11 21l8-7v4h8v6h-8v4z" fill="#3b94d1" /></svg>} />
        <Big caret w="w-10" lines={["复制到"]} icon={<svg width="28" height="30" viewBox="0 0 28 30"><path d="M1 2h22v28H1z" fill="#f9dc7e" /><path d="M10 0h8l2 2v13H10z" fill="#fff" stroke="#8b9aa8" /><path d="M15 4h8l3 3v11H15z" fill="#fff" stroke="#8b9aa8" /><path d="M17 9h7M17 12h7M17 15h7" stroke="#4d9fe0" /></svg>} />
        <span className="mx-1 mt-1 h-14 w-px bg-[#e0e1e3]" />
        <Big caret w="w-10" lines={["删除"]} icon={<svg width="26" height="26" viewBox="0 0 26 26"><path d="M2 2l22 22M24 2L2 24" stroke="#cc1620" strokeWidth="4.500" /></svg>} />
        <Big w="w-[46px]" lines={["重命名"]} icon={<svg width="30" height="28" viewBox="0 0 30 28" fill="none"><path d="M1 8h28v11H1z" fill="#fff" stroke="#8a8a8a" /><path d="M4 11h13v5H4z" fill="#2c87d0" /><path d="M23 3v22M18 1c3 0 5 1 5 3 0-2 2-3 5-3M18 27c3 0 5-1 5-3 0 2 2 3 5 3" stroke="#666" strokeWidth="2" /></svg>} />
      </Group>
      <Group label="新建" w="w-[137px]">
        <Big w="w-12" lines={["新建", "文件夹"]} icon={<Folder s={32} />} />
        <div className="-mt-[3px] flex flex-col">
          <Small caret text="新建项目" icon={<Pages w={16} />} />
          <Small caret text="轻松访问" icon={<I16><path d="M5 1.500h6l3 3v10H5z" fill="#fff" stroke="#888" /><path d="M0 5h6M1 8h4M0 11h3" stroke="#2c7fc4" strokeWidth="1.500" /></I16>} />
        </div>
      </Group>
      <Group label="打开" w="w-[127px]">
        <Big caret w="w-12" lines={["属性"]} icon={<CheckDoc w={29} />} />
        <div className="flex flex-col gap-[3px]">
          <Small caret text="打开" icon={<LD s={16} />} />
          <Small dim text="编辑" icon={<I16><path d="M2 1h9l3 3v11H2z" fill="#cfe1f2" stroke="#9ab" /><path d="M13 5l-6 8" stroke="#7da0c8" strokeWidth="2" /></I16>} />
          <Small text="历史记录" icon={<I16><path d="M1 0h10v14H1z" fill="#f9dc7e" /><circle cx="10.500" cy="10.500" r="5" fill="#e8ece8" stroke="#888" /><path d="M3 10c1-4 5-4 6-3M2 8v4h4" stroke="#34a03c" strokeWidth="1.800" fill="none" /><path d="M10.500 8v3h2" stroke="#555" fill="none" /></I16>} />
        </div>
      </Group>
      <Group label="选择" w="w-[85px]">
        <div className="-mt-[3px] ml-1.5 flex flex-col">
          <Small text="全部选择" icon={<Sq a b c d />} />
          <Small text="全部取消" icon={<Sq />} />
          <Small text="反向选择" icon={<Sq b c />} />
        </div>
      </Group>
    </div>
  );
}

function ExplorerWindow() {
  return (
    <section className="absolute top-[55px] right-[33px] bottom-[104px] left-[768px] flex flex-col overflow-hidden bg-white pl-0.5 text-xs text-[#222] shadow-[0_4px_16px_rgba(0,0,0,.5)]">
      <header className="flex h-[30px] shrink-0 items-center">
        <span><FlatFolder s={16} /></span>
        <span className="ml-2 h-3 w-px bg-[#999]" />
        <span className="ml-2"><CheckDoc w={17} /></span>
        <span className="ml-1.5"><FlatFolder s={16} /></span>
        <span className="ml-2"><Caret /></span>
        <span className="ml-[7px] h-3 w-px bg-[#999]" />
        <span className="ml-[7px] text-[#8a8a8a]">新建文件夹</span>
        <span className="ml-auto flex text-[#777]">
          <button type="button" aria-label="最小化" className="grid h-[30px] w-[45px] place-items-center"><Minus size={13} strokeWidth={1.5} /></button>
          <button type="button" aria-label="最大化" className="grid h-[30px] w-[45px] place-items-center"><Square size={13} strokeWidth={1.5} /></button>
          <button type="button" aria-label="关闭" className="grid h-[30px] w-[46px] place-items-center"><X size={16} strokeWidth={1.3} /></button>
        </span>
      </header>
      <nav className="flex h-[27px] shrink-0">
        <button type="button" className="-ml-0.5 h-6 w-[51px] bg-[#0563b0] pr-1 text-white">文件</button>
        <button type="button" className="relative -mb-px h-7 w-[52px] border border-b-0 border-[#dadbdc] bg-[#f5f6f7]">主页</button>
        <button type="button" className="w-[54px]">共享</button>
        <button type="button" className="w-[52px]">查看</button>
        <span className="ml-auto flex items-center gap-2.5 pr-1">
          <button type="button" aria-label="折叠功能区" className="text-[#999]"><ChevronUp size={12} /></button>
          <button type="button" aria-label="帮助" className="grid h-4 w-4 place-items-center rounded-full bg-[#0567b5] text-[11px] font-bold text-white">?</button>
        </span>
      </nav>
      <Ribbon />
      <div className="flex h-8 shrink-0 items-center pr-[13px]">
        <div className="mr-[5px] flex w-[94px] items-center justify-between pl-1 text-[#ccc]">
          <button type="button" aria-label="后退"><ArrowLeft size={16} strokeWidth={1.5} /></button>
          <button type="button" aria-label="前进" className="ml-2"><ArrowRight size={16} strokeWidth={1.5} /></button>
          <button type="button" aria-label="最近" className="ml-1"><ChevronDown size={9} /></button>
          <button type="button" aria-label="向上" className="text-[#555]"><ArrowUp size={17} /></button>
        </div>
        <div className="flex h-[23px] min-w-0 flex-1 items-center border border-[#d9d9d9] text-[#111]">
          <span className="ml-[3px]"><FlatFolder s={15} /></span>
          <ChevronRight size={10} className="mr-2 ml-[5px]" />此电脑
          <ChevronRight size={10} className="mx-1.5" />Desktop
          <ChevronRight size={10} className="mx-2" />新建文件夹
          <button type="button" aria-label="历史" className="mr-1 ml-auto"><ChevronDown size={11} /></button>
          <button type="button" aria-label="刷新" className="grid h-full w-5 place-items-center border-l border-[#d9d9d9]"><RotateCw size={11} /></button>
        </div>
        <div className="ml-3 flex h-[23px] w-[201px] shrink-0 items-center border border-[#d9d9d9] pr-1.5 pl-2">
          <input aria-label="搜索" placeholder="在 新建文件夹 中搜索" className="min-w-0 flex-1 outline-none placeholder:text-[#666]" />
          <Search size={13} className="-scale-x-100 text-[#444]" />
        </div>
      </div>
      <div className="flex min-h-0 flex-1 pt-[3px]">
        <ul className="w-36 shrink-0 overflow-hidden text-[#111]">
          <li className="flex h-10 items-center gap-1 pl-[19px] whitespace-nowrap">{NavIcons.star}快速访问</li>
          <li className="flex h-6 items-center gap-1.5 pl-[17px] whitespace-nowrap">{NavIcons.desktop}桌面</li>
          {TREE.map(([pad, icon, label]) => (
            <li key={label} className={"-ml-0.5 flex h-6 items-center gap-[5px] whitespace-nowrap " + pad + (label === "此电脑" ? " bg-[#d9d9d9]" : "")}>{NavIcons[icon]}{label}</li>
          ))}
        </ul>
        <div className="ml-px flex w-4 shrink-0 flex-col items-center bg-[#f0f0f0] text-[#555]">
          <button type="button" aria-label="向上滚动" className="grid h-4 shrink-0 place-items-center"><ChevronUp size={12} strokeWidth={3} /></button>
          <span className="min-h-0 w-full grow-[546] bg-[#cdcdcd]" />
          <span className="grow-[140]" />
          <button type="button" aria-label="向下滚动" className="grid h-4 shrink-0 place-items-center"><ChevronDown size={12} strokeWidth={3} /></button>
        </div>
        <ul className="ml-[18px] w-[271px] pt-1.5">
          <li className="flex h-[21px] items-center gap-0.5 bg-[#d9d9d9] pl-1 whitespace-nowrap">
            <I16><path d="M2 0h9l3 3v9H2z" fill="#fff" stroke="#bbb" strokeWidth=".6" /><path d="M5 2h4c5 0 4 6 0 6H7v2H5z" fill="#efb81f" /><path d="M1 11h14v5H1z" fill="#1b1b1b" /><path d="M4 13.500h8" stroke="#c99a2a" strokeDasharray="2 1" /></I16>
            模拟定位助手_2.0.apk
          </li>
          <li className="flex h-[22px] items-center gap-0.5 pr-1.5 pl-1 whitespace-nowrap">
            <I16><path d="M2.500.5h8l3 3v12h-11z" fill="#fff" stroke="#999" /><path d="M4.500 4h5M4.500 6.500h7M4.500 8.500h7M4.500 10.500h7M4.500 12.500h7" stroke="#888" strokeWidth=".8" /></I16>
            软件获取<span className="ml-2.5">微</span><span className="ml-2.5">A8z77777</span><span className="ml-auto">--.txt</span>
          </li>
        </ul>
      </div>
    </section>
  );
}

/* ---------- taskbar ---------- */

const TASKS = [
  ["文件资源管理器", Explorer, true], ["终端", GreenFeather, true], ["迅雷", Xunlei, false], ["千牛", Qianniu, true], ["会话", Avatar, true], ["ToDesk", ToDesk, true],
  ["工具", Diamond, true], ["Edge", Edge, true], ["微信", WeChat, true], ["Chrome", Chrome, true], ["夸克网盘", Quark, true], ["模拟器", LD, false],
];
const TRAY = [Quark, Pinwheel, QQ, TrayShield, Nvidia, TrayWindow, LD, Huorong, WeChat, Kuwo, Baofeng, ToDesk, TraySound];

function Taskbar() {
  return (
    <footer className="absolute inset-x-0 bottom-0 flex h-10 bg-[#cdcdcd] text-xs text-[#111]">
      <button type="button" aria-label="开始" className="grid w-[50px] place-items-center pr-0.5"><WinLogo /></button>
      {TASKS.map(([label, Icon, open]) => (
        <button key={label} type="button" aria-label={label} className={"relative grid w-[49px] place-items-center " + (label === "模拟器" ? "bg-[#ebebeb]" : "")}>
          <Icon s={24} />
          {open && <span className="absolute bottom-0 left-[5px] h-0.5 w-10 bg-[#1f77be]" />}
          {label === "模拟器" && <span className="absolute inset-x-0 bottom-0 h-0.5 bg-[#1f77be]" />}
        </button>
      ))}
      <div className="ml-auto flex items-center">
        {TRAY.map((Icon, i) => <button key={i} type="button" aria-label={"托盘 " + (i + 1)} className="grid w-6 place-items-center"><Icon s={16} /></button>)}
        <button type="button" aria-label="麦克风" className="grid w-6 place-items-center"><Mic size={16} fill="#111" /></button>
        <button type="button" aria-label="网络" className="grid w-6 place-items-center">
          <svg width="17" height="16" viewBox="0 0 17 16" fill="none" stroke="#111" strokeWidth="1.200"><path d="M5 3h11v8H4V8M8 14h6M11 11v3M1 1h4v4H1zM3 5v9" /></svg>
        </button>
        <button type="button" aria-label="音量" className="grid w-6 place-items-center"><Volume2 size={17} strokeWidth={1.5} /></button>
        <button type="button" className="w-[23px] text-center text-sm">中</button>
        <button type="button" aria-label="状态" className="grid w-[34px] place-items-center"><GreenP s={16} /></button>
        <time className="flex w-[75px] flex-col items-center leading-[19px]"><span>18:37</span><span>2025/3/22</span></time>
        <span className="h-10 w-1 border-l border-[#aaa]" />
      </div>
    </footer>
  );
}

export default function App() {
  return (
    <main className="relative h-screen w-full overflow-hidden bg-[#05040d] font-['Noto_Sans','Noto_Sans_CJK_SC',sans-serif]">
      <div className="absolute inset-x-0 top-0 h-[68%] bg-[linear-gradient(#002a63,#07357c_25%,#0a2c6b_50%,#3f3a6a_74%,#84585c)]" />
      <div className="absolute inset-y-0 right-0 h-[62%] w-1/2 bg-[linear-gradient(#3a3a78,#5c4680_30%,#a0608a_60%,#e8a04a_85%,#e6d27a)] mask-l-from-10%" />
      <div className="absolute right-0 top-[62%] h-[6%] w-1/2 bg-[#3a1420] mask-l-from-10%" />
      <div className="absolute inset-x-0 top-[68%] bottom-0 bg-[linear-gradient(#3c0f26,#0d0a18_25%,#03030a)]" />

      <div className="absolute top-0 left-0 flex">
        <DesktopColumn items={COL1} className="w-[74px]" />
        <DesktopColumn items={COL2} className="w-[84px]" />
        <div className="flex w-4 flex-col">
          {COL3.map(([lines, color, pad], i) => (
            <div key={i} className={"flex h-26 flex-col overflow-hidden pt-2 text-xs leading-4 text-white " + (i === 2 ? "bg-[linear-gradient(#86a0c0,#86a0c0)] bg-[length:100%_91px] bg-[position:0_6px] bg-no-repeat" : "")}>
              <span className={"ml-[13px] flex h-12 shrink-0 flex-col justify-end py-0.5 " + color}><span className="h-3 bg-white" /></span>
              {lines.map((l) => <span key={l} className={pad}>{l}</span>)}
            </div>
          ))}
        </div>
      </div>
      <span className="absolute bottom-[57px] left-[178px] text-xs leading-4 text-white">录.exe</span>

      <aside className="absolute top-[14px] right-[13px] h-[246px] w-[266px] border border-white/10 bg-[#1b1a4a]/40">
        <h2 className="h-7 bg-[#14133c]/50 pr-2 text-center text-xs leading-7 font-bold text-white">桌面助手</h2>
        <span className="absolute top-[209px] right-1 h-9 w-8 border border-white/30 bg-white/15" />
      </aside>
      <aside className="absolute top-[274px] right-[13px] bottom-10 w-[255px] border border-white/10 bg-[#1b1a4a]/30">
        <div className="h-7 bg-[#14133c]/50" />
      </aside>

      <ExplorerWindow />
      <Emulator />
      <button type="button" className="absolute top-[310px] right-[165px] h-[46px] w-[46px] rounded-full border-2 border-white bg-linear-to-b from-[#6fb6ef] from-45% to-[#2f93e6] to-55% text-[13px] text-white shadow-md">01:29</button>
      <Taskbar />
    </main>
  );
}
